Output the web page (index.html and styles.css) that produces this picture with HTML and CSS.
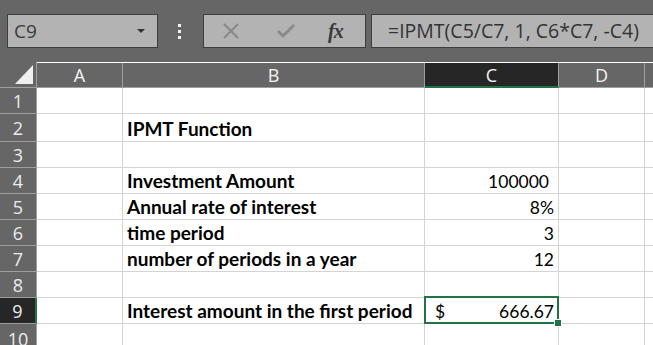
FILE: index.html
```html
<!DOCTYPE html>
<html lang="en">
<head>
    <meta charset="UTF-8">
    <title>IPMT Function</title>
    <link rel="stylesheet" href="styles.css">
</head>
<body>
<div class="toolbar">
    <div class="nameBox">
        <span>C9</span>
        <span class="dropArrow"></span>
    </div>
    <div class="grip">
        <span></span><span></span><span></span>
    </div>
    <div class="fnButtons">
        <svg class="fnIcon" width="18" height="18" viewBox="0 0 18 18">
            <path d="M2 2 L16 16 M16 2 L2 16" stroke="#8a8a8a" stroke-width="2.2" fill="none"/>
        </svg>
        <svg class="fnIcon" width="20" height="18" viewBox="0 0 20 18">
            <path d="M2 9 L7 14 L18 3" stroke="#8a8a8a" stroke-width="3" fill="none"/>
        </svg>
        <span class="fx">fx</span>
    </div>
    <div class="formulaBar">=IPMT(C5/C7, 1, C6*C7, -C4)</div>
</div>

<div class="sheet">
    <div class="corner"><span class="triangle"></span></div>
    <div class="colHead">A</div>
    <div class="colHead">B</div>
    <div class="colHead active">C</div>
    <div class="colHead">D</div>
    <div class="colHead"></div>

    <div class="rowHead">1</div>
    <div class="cell"></div><div class="cell"></div><div class="cell"></div><div class="cell"></div><div class="cell"></div>

    <div class="rowHead">2</div>
    <div class="cell"></div><div class="cell bold">IPMT Function</div><div class="cell"></div><div class="cell"></div><div class="cell"></div>

    <div class="rowHead">3</div>
    <div class="cell"></div><div class="cell"></div><div class="cell"></div><div class="cell"></div><div class="cell"></div>

    <div class="rowHead">4</div>
    <div class="cell"></div><div class="cell bold">Investment Amount</div><div class="cell num padMore">100000</div><div class="cell"></div><div class="cell"></div>

    <div class="rowHead">5</div>
    <div class="cell"></div><div class="cell bold">Annual rate of interest</div><div class="cell num">8%</div><div class="cell"></div><div class="cell"></div>

    <div class="rowHead">6</div>
    <div class="cell"></div><div class="cell bold">time period</div><div class="cell num">3</div><div class="cell"></div><div class="cell"></div>

    <div class="rowHead">7</div>
    <div class="cell"></div><div class="cell bold">number of periods in a year</div><div class="cell num">12</div><div class="cell"></div><div class="cell"></div>

    <div class="rowHead">8</div>
    <div class="cell"></div><div class="cell"></div><div class="cell"></div><div class="cell"></div><div class="cell"></div>

    <div class="rowHead active">9</div>
    <div class="cell"></div><div class="cell bold">Interest amount in the first period</div>
    <div class="cell money selected"><span>$</span><span class="amount">666.67</span></div>
    <div class="cell"></div><div class="cell"></div>

    <div class="rowHead">10</div>
    <div class="cell"></div><div class="cell"></div><div class="cell"></div><div class="cell"></div><div class="cell"></div>
</div>
</body>
</html>
```
FILE: styles.css
```css
body {
    margin: 0;
    padding: 0;
    width: 653px;
    height: 345px;
    overflow: hidden;
    background-color: #FFF;
    font-family: Lato, "Liberation Sans", sans-serif;
}

.toolbar {
    display: flex;
    align-items: center;
    height: 62px;
    padding-left: 7px;
    background-color: #666666;
    box-sizing: border-box;
}

.nameBox {
    display: flex;
    justify-content: space-between;
    align-items: center;
    width: 151px;
    height: 34px;
    padding: 0 12px 0 6px;
    box-sizing: border-box;
    background-color: #B3B3B3;
    border: 1px solid #3E3E3E;
    color: #3A3A3A;
    font-family: "Open Sans", sans-serif;
    font-size: 19px;
}

.dropArrow {
    width: 0;
    height: 0;
    border-left: 4px solid transparent;
    border-right: 4px solid transparent;
    border-top: 4px solid #333;
}

.grip {
    display: flex;
    flex-direction: column;
    gap: 3px;
    margin-left: 20px;
    margin-right: 22px;
}

.grip span {
    width: 3px;
    height: 3px;
    background-color: #F2F2F2;
}

.fnButtons {
    display: flex;
    align-items: center;
    width: 163px;
    height: 34px;
    box-sizing: border-box;
    background-color: #B3B3B3;
    border: 1px solid #3E3E3E;
    padding-left: 18px;
}

.fnIcon {
    margin-right: 36px;
}

.fnIcon + .fnIcon {
    margin-right: 32px;
}

.fx {
    font-family: "Liberation Serif", serif;
    font-style: italic;
    font-weight: bold;
    font-size: 20px;
    color: #3A3A3A;
    letter-spacing: -1px;
}

.formulaBar {
    flex-grow: 1;
    height: 34px;
    margin-left: 5px;
    box-sizing: border-box;
    background-color: #B3B3B3;
    border: 1px solid #3E3E3E;
    border-right: none;
    padding-left: 16px;
    color: #333;
    font-family: "Open Sans", sans-serif;
    font-size: 19.5px;
    line-height: 31px;
    white-space: nowrap;
}

.sheet {
    display: grid;
    grid-template-columns: 37px 86px 302px 134px 86px 1fr;
    grid-template-rows: 26px 26px 28px 26px 26px 26px 26px 26px 26px 26px 30px;
}

.corner {
    position: relative;
    background-color: #666666;
    border-right: 1px solid #9E9E9E;
    border-bottom: 1px solid #9E9E9E;
}

.triangle {
    position: absolute;
    right: 3px;
    bottom: 3px;
    width: 0;
    height: 0;
    border-left: 18px solid transparent;
    border-bottom: 19px solid #F0F0F0;
}

.colHead {
    display: flex;
    justify-content: center;
    align-items: center;
    margin-top: 1px;
    background-color: #666666;
    border-right: 1px solid #9E9E9E;
    border-bottom: 1px solid #9E9E9E;
    color: #F4F4F4;
    font-family: "Open Sans", sans-serif;
    font-size: 18px;
}

.colHead.active {
    background-color: #262626;
    border-bottom: 2px solid #217346;
}

.rowHead {
    display: flex;
    justify-content: center;
    align-items: center;
    background-color: #666666;
    border-right: 1px solid #9E9E9E;
    border-bottom: 1px solid #9E9E9E;
    color: #ECECEC;
    font-family: "Open Sans", sans-serif;
    font-size: 18px;
}

.rowHead.active {
    background-color: #262626;
    border-right: 2px solid #217346;
}

.cell {
    display: flex;
    align-items: flex-end;
    padding: 0 4px 1px 4px;
    box-sizing: border-box;
    border-right: 1px solid #D4D4D4;
    border-bottom: 1px solid #D4D4D4;
    color: #000;
    font-size: 17.5px;
    white-space: nowrap;
    overflow: visible;
}

.bold {
    font-weight: bold;
    font-size: 19px;
}

.num {
    justify-content: flex-end;
}

.padMore {
    padding-right: 9px;
}

.money {
    justify-content: space-between;
    padding-left: 10px;
}

.selected {
    position: relative;
}

.selected::after {
    content: "";
    position: absolute;
    left: -1px;
    top: -2px;
    right: -1px;
    bottom: -1px;
    border: 2px solid #217346;
}

.selected::before {
    content: "";
    position: absolute;
    right: -4px;
    bottom: -4px;
    width: 6px;
    height: 6px;
    background-color: #217346;
    border: 1px solid #FFF;
    z-index: 1;
}
```
